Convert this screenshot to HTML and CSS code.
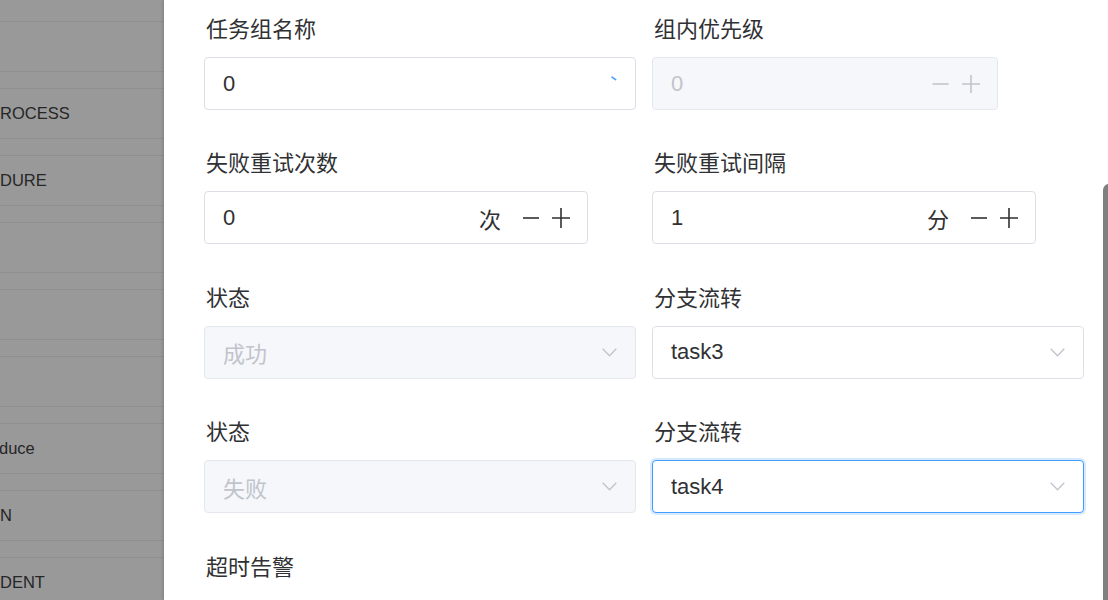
FILE: index.html
```html
<!DOCTYPE html>
<html lang="zh-CN">
<head>
<meta charset="utf-8">
<title>任务组</title>
<link rel="stylesheet" href="styles.css">
</head>
<body>
<div class="page">
  <aside class="list">
    <div class="list-row"></div>
    <div class="list-row"><span class="cell">ROCESS</span></div>
    <div class="list-row"><span class="cell">DURE</span></div>
    <div class="list-row"></div>
    <div class="list-row"></div>
    <div class="list-row"></div>
    <div class="list-row"><span class="cell cut">duce</span></div>
    <div class="list-row"><span class="cell">N</span></div>
    <div class="list-row"><span class="cell">DENT</span></div>
  </aside>

  <main class="drawer">
    <div class="form">
      <div class="item">
        <div class="label">任务组名称</div>
        <div class="field w-full">
          <span class="value">0</span>
          <svg class="spin" width="6" height="5" viewBox="0 0 6 5"><path d="M1 1.2 L4.6 3.6" stroke="#409eff" stroke-width="1.6" stroke-linecap="round" fill="none"/></svg>
        </div>
      </div>

      <div class="item">
        <div class="label">组内优先级</div>
        <div class="field w-priority is-disabled">
          <span class="value">0</span>
          <svg class="ctrl minus" width="17" height="18" viewBox="0 0 17 18"><path d="M0.5 9 H16.5" stroke="currentColor" stroke-width="1.6" fill="none"/></svg>
          <svg class="ctrl plus" width="18" height="18" viewBox="0 0 18 18"><path d="M0 9 H18 M9 0 V18" stroke="currentColor" stroke-width="1.6" fill="none"/></svg>
        </div>
      </div>

      <div class="item">
        <div class="label">失败重试次数</div>
        <div class="field w-number">
          <span class="value">0</span>
          <span class="unit">次</span>
          <svg class="ctrl minus" width="16" height="18" viewBox="0 0 16 18"><path d="M0 9 H16" stroke="currentColor" stroke-width="1.6" fill="none"/></svg>
          <svg class="ctrl plus" width="18" height="20" viewBox="0 0 18 20"><path d="M0 10 H18 M9 0 V20" stroke="currentColor" stroke-width="1.6" fill="none"/></svg>
        </div>
      </div>

      <div class="item">
        <div class="label">失败重试间隔</div>
        <div class="field w-number">
          <span class="value">1</span>
          <span class="unit">分</span>
          <svg class="ctrl minus" width="16" height="18" viewBox="0 0 16 18"><path d="M0 9 H16" stroke="currentColor" stroke-width="1.6" fill="none"/></svg>
          <svg class="ctrl plus" width="18" height="20" viewBox="0 0 18 20"><path d="M0 10 H18 M9 0 V20" stroke="currentColor" stroke-width="1.6" fill="none"/></svg>
        </div>
      </div>

      <div class="item">
        <div class="label">状态</div>
        <div class="field w-full is-disabled">
          <span class="value">成功</span>
          <svg class="chev" width="15" height="9" viewBox="0 0 15 9"><path d="M0.7 0.7 L7.5 7.8 L14.3 0.7" stroke="currentColor" stroke-width="1.3" fill="none"/></svg>
        </div>
      </div>

      <div class="item">
        <div class="label">分支流转</div>
        <div class="field w-full">
          <span class="value">task3</span>
          <svg class="chev" width="15" height="9" viewBox="0 0 15 9"><path d="M0.7 0.7 L7.5 7.8 L14.3 0.7" stroke="currentColor" stroke-width="1.3" fill="none"/></svg>
        </div>
      </div>

      <div class="item">
        <div class="label">状态</div>
        <div class="field w-full is-disabled">
          <span class="value">失败</span>
          <svg class="chev" width="15" height="9" viewBox="0 0 15 9"><path d="M0.7 0.7 L7.5 7.8 L14.3 0.7" stroke="currentColor" stroke-width="1.3" fill="none"/></svg>
        </div>
      </div>

      <div class="item">
        <div class="label">分支流转</div>
        <div class="field w-full is-focus">
          <span class="value">task4</span>
          <svg class="chev" width="15" height="9" viewBox="0 0 15 9"><path d="M0.7 0.7 L7.5 7.8 L14.3 0.7" stroke="currentColor" stroke-width="1.3" fill="none"/></svg>
        </div>
      </div>

      <div class="item">
        <div class="label">超时告警</div>
      </div>
    </div>
  </main>

  <div class="scroll-thumb"></div>
</div>
</body>
</html>
```

FILE: styles.css
```css
html, body {
  margin: 0;
  padding: 0;
  height: 100%;
  overflow: hidden;
  background: #ffffff;
}

.page {
  position: relative;
  display: flex;
  width: 1108px;
  height: 600px;
  overflow: hidden;
  font-family: "Liberation Sans", "Noto Sans CJK SC", sans-serif;
}

/* dimmed list behind the drawer */
.list {
  width: 164px;
  flex: 0 0 164px;
  background: #999999;
  padding-top: 21px;
  box-sizing: border-box;
  display: flex;
  flex-direction: column;
  gap: 16px;
  overflow: hidden;
}

.list-row {
  flex: 0 0 51px;
  height: 51px;
  box-sizing: border-box;
  border-top: 1px solid #8d8f92;
  border-bottom: 1px solid #8d8f92;
  display: flex;
  align-items: center;
  overflow: hidden;
}

.cell {
  font-size: 16.5px;
  color: #262627;
  white-space: nowrap;
}

.cell.cut {
  margin-left: -1px;
}

/* drawer */
.drawer {
  flex: 1;
  background: #ffffff;
  padding: 15px 24px 0 40px;
  box-shadow: -1px 0 3px rgba(0, 0, 0, 0.18);
  position: relative;
}

.form {
  display: grid;
  grid-template-columns: 432px 432px;
  column-gap: 16px;
  row-gap: 39.4px;
}

.item {
  display: flex;
  flex-direction: column;
  align-items: flex-start;
  gap: 12px;
}

.label {
  height: 30px;
  line-height: 30px;
  font-size: 22px;
  color: #303133;
  padding-left: 2px;
  white-space: nowrap;
}

.field {
  height: 53px;
  box-sizing: border-box;
  border: 1px solid #dcdfe6;
  border-radius: 4px;
  background: #ffffff;
  display: flex;
  align-items: center;
  padding: 0 17px 0 18px;
  font-size: 22px;
  color: #303133;
}

.w-full { width: 432px; }
.w-number { width: 384px; }
.w-priority { width: 346px; }

.value {
  flex: 1;
  white-space: nowrap;
}

.is-disabled {
  background: #f5f7fa;
  border-color: #e4e7ed;
  color: #c0c4cc;
}

.is-focus {
  border-color: #409eff;
  box-shadow: 0 0 0 2px rgba(64, 158, 255, 0.22);
}

.unit {
  font-size: 22px;
  color: #303133;
  margin-right: 22px;
}

.ctrl {
  display: block;
  color: #303133;
}

.is-disabled .ctrl {
  color: #c0c4cc;
}

.minus {
  margin-right: 13px;
}

.chev {
  display: block;
  color: #c0c4cc;
  margin-right: 1px;
}

.spin {
  display: block;
  margin: 0 1px 10px 0;
}

.scroll-thumb {
  position: absolute;
  left: 1103px;
  top: 184px;
  width: 12px;
  height: 440px;
  background: #808080;
  border-radius: 6px;
}
```
